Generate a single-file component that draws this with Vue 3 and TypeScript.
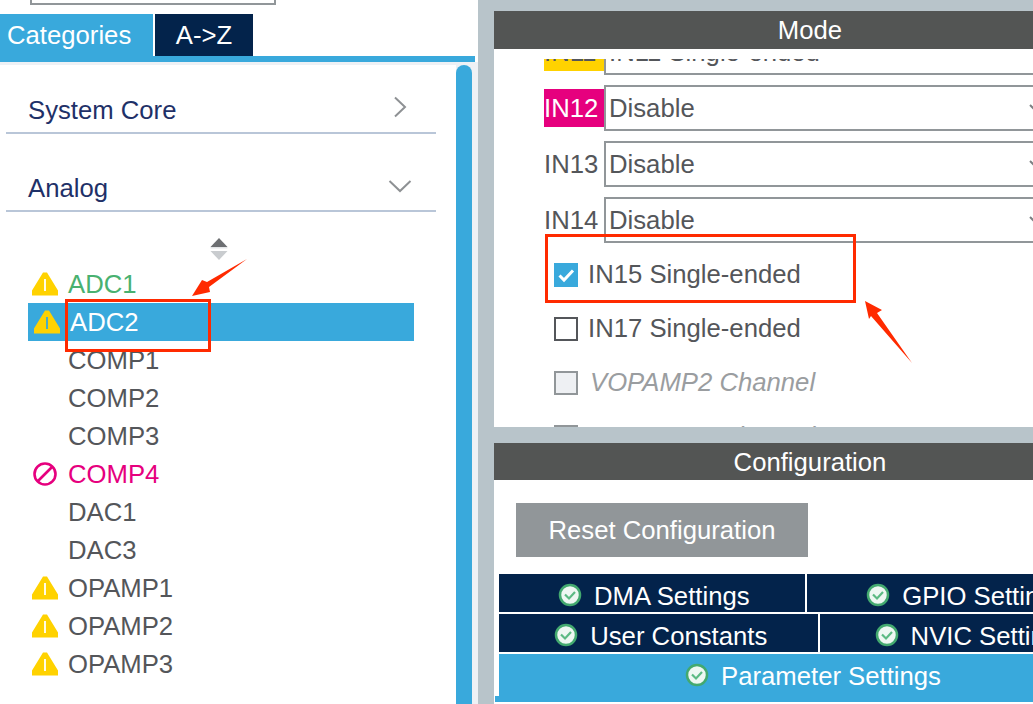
<script setup lang="ts">
type Status = 'ok' | 'warn' | 'error' | 'none';

interface Peripheral {
  name: string;
  status: Status;
  tone?: 'green' | 'pink';
  selected?: boolean;
}

const peripherals: Peripheral[] = [
  { name: 'ADC1', status: 'warn', tone: 'green' },
  { name: 'ADC2', status: 'warn', selected: true },
  { name: 'COMP1', status: 'none' },
  { name: 'COMP2', status: 'none' },
  { name: 'COMP3', status: 'none' },
  { name: 'COMP4', status: 'error', tone: 'pink' },
  { name: 'DAC1', status: 'none' },
  { name: 'DAC3', status: 'none' },
  { name: 'OPAMP1', status: 'warn' },
  { name: 'OPAMP2', status: 'warn' },
  { name: 'OPAMP3', status: 'warn' },
];

const channels = [
  { label: 'IN12', value: 'Disable', tone: 'pink' },
  { label: 'IN13', value: 'Disable', tone: '' },
  { label: 'IN14', value: 'Disable', tone: '' },
];

const checks = [
  { label: 'IN15 Single-ended', state: 'checked' },
  { label: 'IN17 Single-ended', state: 'empty' },
  { label: 'VOPAMP2 Channel', state: 'disabled' },
  { label: 'VOPAMP3 Channel', state: 'disabled' },
];

const tabRows = [
  [
    { label: 'DMA Settings', width: 306 },
    { label: 'GPIO Settings', width: 320 },
  ],
  [
    { label: 'User Constants', width: 320 },
    { label: 'NVIC Settings', width: 306 },
  ],
];
</script>

<template>
  <div class="page">
    <aside class="left">
      <div class="search-stub"></div>
      <div class="view-tabs">
        <div class="view-tab is-active">Categories</div>
        <div class="view-tab">A-&gt;Z</div>
      </div>
      <div class="tree-wrap">
        <div class="tree">
          <div class="group">
            <span>System Core</span>
            <svg class="chev-right" width="14" height="22" viewBox="0 0 14 22">
              <path d="M2 1.5 12 11 2 20.5" fill="none" stroke="#8e9194" stroke-width="2" />
            </svg>
          </div>
          <div class="group group-open">
            <span>Analog</span>
            <svg class="chev-down" width="24" height="14" viewBox="0 0 24 14">
              <path d="M1.5 2 12 12 22.5 2" fill="none" stroke="#8e9194" stroke-width="2" />
            </svg>
          </div>
          <div class="sorter">
            <svg width="18" height="24" viewBox="0 0 18 24">
              <path d="M9 1 17.500 10H.5z" fill="#6d6f72" />
              <path d="M.5 10H17.500V11.500H.5z" fill="#e4e6e8" />
              <path d="M.5 14H17.500L9 23z" fill="#c9cccf" />
            </svg>
          </div>
          <ul class="items">
            <li
              v-for="item in peripherals"
              :key="item.name"
              class="item"
              :class="[item.tone && `is-${item.tone}`, { 'is-selected': item.selected }]"
            >
              <span class="item-icon">
                <svg v-if="item.status === 'warn'" width="28" height="24" viewBox="0 0 28 24">
                  <path
                    fill="#ffd200"
                    fill-rule="evenodd"
                    d="M12 .5h4L27 18.500v5H1v-5zM13.100 7v12h1.800V7z"
                  />
                </svg>
                <svg v-else-if="item.status === 'error'" width="26" height="26" viewBox="0 0 26 26">
                  <circle cx="13" cy="13" r="10.500" fill="none" stroke="#e6007e" stroke-width="2.600" />
                  <path d="M6 20 20 6" stroke="#e6007e" stroke-width="2.600" />
                </svg>
              </span>
              <span class="item-name">{{ item.name }}</span>
            </li>
          </ul>
        </div>
        <div class="scroll-thumb"></div>
      </div>
    </aside>

    <main class="right">
      <div class="panel-head mode-head">Mode</div>
      <div class="mode-view">
        <div class="mode-clip">
          <div class="mode-inner">
            <div class="channels">
              <div class="channel">
                <span class="channel-label is-yellow">IN11</span>
                <div class="select"><span>IN11 Single-ended</span></div>
              </div>
              <div v-for="ch in channels" :key="ch.label" class="channel">
                <span class="channel-label" :class="ch.tone && `is-${ch.tone}`">{{ ch.label }}</span>
                <div class="select">
                  <span>{{ ch.value }}</span>
                  <svg width="12" height="8" viewBox="0 0 12 8">
                    <path d="M1 1 6 6 11 1" fill="none" stroke="#7d8083" stroke-width="2" />
                  </svg>
                </div>
              </div>
            </div>
            <div class="checks">
              <div v-for="c in checks" :key="c.label" class="check" :class="`is-${c.state}`">
                <span class="box">
                  <svg v-if="c.state === 'checked'" width="24" height="24" viewBox="0 0 24 24">
                    <path d="M5.500 12.500 10 17 19 7.500" fill="none" stroke="#fff" stroke-width="3" />
                  </svg>
                </span>
                <span class="check-text">{{ c.label }}</span>
              </div>
            </div>
          </div>
        </div>
      </div>

      <div class="panel-head config-head">Configuration</div>
      <div class="config">
        <button class="reset" type="button">Reset Configuration</button>
        <div class="tabs">
          <div v-for="(row, i) in tabRows" :key="i" class="tab-row">
            <div v-for="t in row" :key="t.label" class="tab" :style="{ width: t.width + 'px' }">
              <svg class="ok" width="24" height="24" viewBox="0 0 24 24">
                <circle cx="12" cy="12" r="10" fill="#eef7f2" stroke="#43a96f" stroke-width="2.500" />
                <path d="M7 11.500 11 15.500 17 9" fill="none" stroke="#5cba83" stroke-width="2.200" />
              </svg>
              <span>{{ t.label }}</span>
            </div>
          </div>
          <div class="tab tab-active">
            <svg class="ok" width="24" height="24" viewBox="0 0 24 24">
              <circle cx="12" cy="12" r="10" fill="#eef7f2" stroke="#43a96f" stroke-width="2.500" />
              <path d="M7 11.500 11 15.500 17 9" fill="none" stroke="#5cba83" stroke-width="2.200" />
            </svg>
            <span>Parameter Settings</span>
          </div>
        </div>
      </div>
    </main>

    <!-- red marks drawn over the screenshot -->
    <div class="mark mark-adc"></div>
    <div class="mark mark-in15"></div>
    <svg class="arrows" width="1033" height="704" viewBox="0 0 1033 704">
      <path d="M247 259 207 282 202 280 192 296 210 292 209 287z" fill="#ff2a00" />
      <path d="M865 301 882 310 877 313 912 363 871 316 869 319z" fill="#ff2a00" />
    </svg>
  </div>
</template>

<style>
html,
body {
  margin: 0;
  background: #fff;
  overflow: hidden;
}
</style>

<style scoped>
.page {
  position: relative;
  display: flex;
  width: 1033px;
  height: 704px;
  overflow: hidden;
  background: #b8c4ca;
  color: #54565a;
  font-family: "Liberation Sans", Arial, sans-serif;
  font-size: 25.700px;
}

.left {
  flex: none;
  width: 478px;
  height: 704px;
  overflow: hidden;
  background: #fff;
}

.search-stub {
  box-sizing: border-box;
  width: 246px;
  height: 5px;
  margin-left: 30px;
  border: 2px solid #919699;
  border-top: 0;
}

.view-tabs {
  display: flex;
  gap: 2px;
  width: 475px;
  height: 42px;
  margin-top: 9px;
  border-bottom: 6px solid #39a9dc;
  color: #fff;
}

.view-tab {
  display: flex;
  align-items: center;
  justify-content: center;
  width: 98px;
  background: #03234b;
}

.view-tab.is-active {
  width: 153px;
  justify-content: flex-start;
  padding-left: 7px;
  box-sizing: border-box;
  background: #39a9dc;
}

.tree-wrap {
  display: flex;
  box-sizing: border-box;
  width: 478px;
  height: 642px;
  padding: 3px 6px 0 0;
  background: #eef1f5;
}

.tree {
  flex: 1;
  padding-left: 6px;
  background: #fff;
}

.scroll-thumb {
  flex: none;
  width: 16px;
  border-radius: 8px 8px 0 0;
  background: #39a9dc;
}

.group {
  display: flex;
  align-items: center;
  justify-content: space-between;
  box-sizing: border-box;
  width: 430px;
  height: 41px;
  margin-top: 28px;
  padding: 0 24px 0 22px;
  border-bottom: 2px solid #b9c6d8;
  color: #1f3168;
}

.group span {
  margin-bottom: 4px;
}

.group-open {
  margin-top: 37px;
}

.chev-right {
  margin: -11px 5px 0 0;
}

.chev-down {
  margin: -10px 0 0 0;
}

.sorter {
  display: flex;
  justify-content: center;
  width: 426px;
  height: 30px;
  margin-top: 25px;
}

.items {
  margin: -2px 0 0;
  padding: 0 0 0 22px;
  list-style: none;
}

.item {
  display: flex;
  align-items: center;
  width: 386px;
  height: 38px;
}

.item-icon {
  display: flex;
  align-items: center;
  justify-content: center;
  flex: none;
  width: 34px;
  margin-right: 6px;
}

.item.is-green {
  color: #49b170;
}

.item.is-pink {
  color: #e6007e;
}

.item.is-selected {
  background: #39a9dc;
  color: #fff;
}

.item.is-selected .item-icon {
  margin-left: 2px;
}

.right {
  flex: none;
  width: 632px;
  height: 704px;
  margin-left: 16px;
}

.panel-head {
  display: flex;
  align-items: center;
  justify-content: center;
  box-sizing: border-box;
  background: #535554;
  color: #fff;
}

.mode-head {
  height: 38px;
  margin-top: 11px;
}

.config-head {
  height: 37px;
  margin-top: 16px;
  padding-top: 2px;
}

/* the white band above the clip is part of the mode panel */
.mode-view {
  box-sizing: border-box;
  height: 378px;
  padding-top: 10px;
  background: #fff;
}

.mode-clip {
  height: 368px;
  overflow: hidden;
}

.mode-inner {
  margin-top: -30px;
  padding-left: 50px;
}

.channels {
  display: flex;
  flex-direction: column;
  gap: 10px;
}

.channel {
  display: flex;
  align-items: center;
  height: 46px;
}

.channel-label {
  display: flex;
  align-items: center;
  flex: none;
  width: 60px;
  height: 38px;
}

.channel-label.is-yellow {
  background: #ffd200;
}

.channel-label.is-pink {
  background: #e6007e;
  color: #fff;
}

.select {
  display: flex;
  align-items: center;
  justify-content: space-between;
  box-sizing: border-box;
  width: 445px;
  height: 46px;
  padding: 0 6px 0 3px;
  border: 2px solid #919699;
  background: #fff;
}

.checks {
  margin-top: 5px;
}

.check {
  display: flex;
  align-items: center;
  height: 54px;
  padding-left: 10px;
}

.box {
  box-sizing: border-box;
  flex: none;
  width: 24px;
  height: 24px;
  margin-right: 10px;
  border: 2px solid #54565a;
}

.box svg {
  display: block;
  margin: -2px;
}

.check-text {
  margin-bottom: 2px;
}

.check.is-checked .box {
  border-color: #39a9dc;
  background: #39a9dc;
}

.check.is-disabled .box {
  border-color: #919699;
  background: #eef0f3;
}

.check.is-disabled .check-text {
  margin-left: 2px;
  color: #9a9da0;
  font-style: italic;
}

.config {
  box-sizing: border-box;
  height: 224px;
  padding-top: 23px;
  background: #fff;
}

.reset {
  display: block;
  width: 292px;
  height: 54px;
  margin: 0 0 0 22px;
  padding: 0;
  border: 0;
  background: #919699;
  color: #fff;
  font: inherit;
}

.tabs {
  display: flex;
  flex-direction: column;
  gap: 2px;
  margin: 17px 0 0 5px;
}

.tab-row {
  display: flex;
  gap: 2px;
}

.tab {
  display: flex;
  align-items: center;
  justify-content: center;
  gap: 12px;
  box-sizing: border-box;
  height: 38px;
  padding-top: 4px;
  background: #03234b;
  color: #fff;
}

.tab-row .tab:first-child {
  padding-left: 4px;
}

.tab span {
  margin-top: 2px;
}

.tab-active {
  position: relative;
  width: 628px;
  height: 48px;
  padding: 0 0 6px;
  background: #39a9dc;
}

.tab-active::before {
  content: "";
  position: absolute;
  left: -4px;
  bottom: 0;
  width: 4px;
  height: 6px;
  background: #39a9dc;
}

.mark {
  position: absolute;
  box-sizing: border-box;
  border: 3px solid #ff2a00;
  pointer-events: none;
}

.mark-adc {
  left: 65px;
  top: 299px;
  width: 146px;
  height: 53px;
}

.mark-in15 {
  left: 545px;
  top: 234px;
  width: 311px;
  height: 69px;
}

.arrows {
  position: absolute;
  left: 0;
  top: 0;
  pointer-events: none;
}
</style>
